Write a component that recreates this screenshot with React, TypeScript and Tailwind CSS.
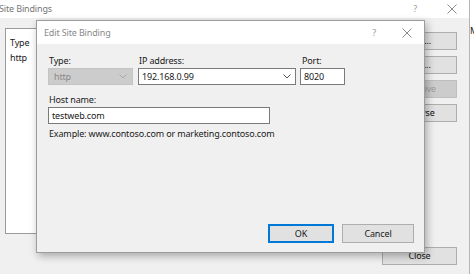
import React from "react";

const Chevron = ({ color = "#555" }: { color?: string }) => (
  <svg width="8" height="5" viewBox="0 0 8 5" className="shrink-0">
    <polyline points="0.5,0.5 4,4 7.5,0.5" fill="none" stroke={color} strokeWidth="1" />
  </svg>
);

const CloseX = () => (
  <svg width="10" height="10" viewBox="0 0 10 10">
    <path d="M0.5 0.5 L9.5 9.5 M9.5 0.5 L0.5 9.5" stroke="#8a8a8a" strokeWidth="1" />
  </svg>
);

const BgButton = ({ label, disabled }: { label: string; disabled?: boolean }) => (
  <div
    className={
      disabled
        ? "h-[18px] w-[75px] flex items-center justify-center border border-[#bfbfbf] bg-[#cccccc] text-[#a0a0a0]"
        : "h-[18px] w-[75px] flex items-center justify-center border border-[#adadad] bg-[#e1e1e1] text-[#111]"
    }
  >
    {label}
  </div>
);

const App = () => {
  return (
    <div
      className="relative w-[474px] h-[274px] overflow-hidden bg-white text-[9px] tracking-[-0.15px] text-[#1a1a1a]"
      style={{ fontFamily: '"Segoe UI", "Noto Sans", sans-serif' }}
    >
      {/* Site Bindings window behind */}
      <div className="absolute left-0 top-0 w-[470px] h-[274px] flex flex-col bg-[#f0f0f0] border-r border-[#b5b5b5]">
        <div className="h-[18px] bg-white flex items-center">
          <span className="ml-[-1px] text-[#777]">Site Bindings</span>
          <span className="ml-auto mr-[30px] text-[#999]">?</span>
          <div className="mr-[12px]">
            <CloseX />
          </div>
        </div>
        <div className="flex items-start pl-[5px] pt-[10px]">
          <div className="w-[370px] h-[206px] bg-white border border-[#9a9a9a]">
            <div className="pl-[4px] pt-[6px] leading-[15px]">Type</div>
            <div className="pl-[4px] leading-[15px]">http</div>
          </div>
          <div className="ml-auto mr-[12px] mt-[4px] flex flex-col gap-[6px]">
            <BgButton label="Add..." />
            <BgButton label="Edit..." />
            <BgButton label="Remove" disabled />
            <BgButton label="Browse" />
          </div>
        </div>
        <div className="flex justify-end mr-[12px] mt-[13px]">
          <BgButton label="Close" />
        </div>
      </div>
      <div className="absolute left-[470px] top-[24px] text-[#222]">M</div>

      {/* Edit Site Binding dialog */}
      <div className="absolute left-[36px] top-[20px] w-[389px] h-[233px] flex flex-col bg-[#f0f0f0] border border-[#9c9c9c] shadow-[2px_3px_8px_rgba(0,0,0,0.3)]">
        <div className="h-[23px] bg-white flex items-center">
          <span className="ml-[7px] text-[#8a8a8a]">Edit Site Binding</span>
          <span className="ml-auto mr-[26px] text-[#999]">?</span>
          <div className="mr-[12px]">
            <CloseX />
          </div>
        </div>
        <div className="flex flex-col flex-1 pl-[11px] pr-[10px] pt-[9px] pb-[9px]">
          <div className="flex gap-[5px] items-end">
            <div className="flex flex-col w-[85px]">
              <span className="leading-[15px] ml-[1px]">Type:</span>
              <div className="h-[17px] flex items-center justify-between px-[5px] bg-[#cccccc] border border-[#c4c4c4] text-[#8a8a8a]">
                <span>http</span>
                <Chevron color="#a8a8a8" />
              </div>
            </div>
            <div className="flex flex-col w-[158px]">
              <span className="leading-[15px] ml-[1px]">IP address:</span>
              <div className="h-[17px] flex items-center justify-between pl-[3px] pr-[4px] bg-white border border-[#7a7a7a]">
                <span>192.168.0.99</span>
                <Chevron />
              </div>
            </div>
            <div className="flex flex-col w-[45px] ml-[-1px]">
              <span className="leading-[15px] ml-[2px]">Port:</span>
              <div className="h-[17px] flex items-center pl-[3px] bg-white border border-[#7a7a7a]">
                <span>8020</span>
              </div>
            </div>
          </div>
          <span className="mt-[7px] leading-[15px] ml-[1px]">Host name:</span>
          <div className="w-[222px] h-[17px] flex items-center pl-[3px] bg-white border border-[#7a7a7a]">
            <span>testweb.com</span>
          </div>
          <span className="mt-[2px] leading-[15px] ml-[1px]">Example: www.contoso.com or marketing.contoso.com</span>
          <div className="mt-auto flex justify-end gap-[8px]">
            <div className="w-[66px] h-[19px] flex items-center justify-center bg-[#e1e1e1] border-2 border-[#0078d7]">
              OK
            </div>
            <div className="w-[72px] h-[19px] flex items-center justify-center bg-[#e1e1e1] border border-[#adadad]">
              Cancel
            </div>
          </div>
        </div>
      </div>
    </div>
  );
};

export default App;
